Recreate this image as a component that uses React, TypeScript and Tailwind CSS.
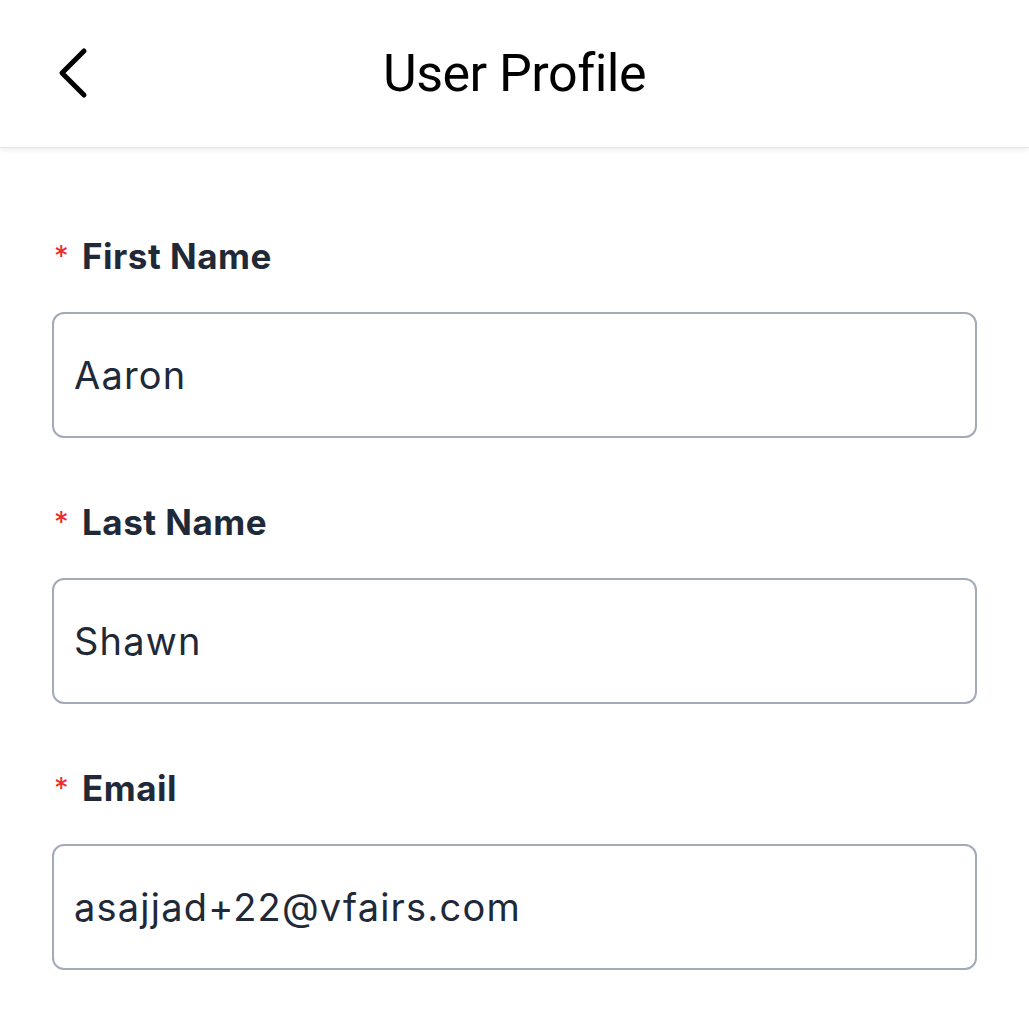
const fields = [
  { label: "First Name", value: "Aaron" },
  { label: "Last Name", value: "Shawn" },
  { label: "Email", value: "asajjad+22@vfairs.com" },
];

export default function App() {
  return (
    <div className="min-h-screen bg-white font-['Inter',sans-serif]">
      <header className="relative flex h-[148px] items-center justify-center border-b border-[#e5e5e5] shadow-[0_2px_5px_rgba(0,0,0,0.07)]">
        <button className="absolute left-[52px] top-[44px] text-black">
          <svg width="40" height="60" viewBox="0 0 40 60" fill="none">
            <path
              d="M32 7 L10 29 L32 51"
              stroke="currentColor"
              strokeWidth="5"
              strokeLinecap="round"
              strokeLinejoin="round"
            />
          </svg>
        </button>
        <h1 className="font-['Roboto',sans-serif] text-[52px] leading-none font-normal tracking-[-0.5px] text-black">
          User Profile
        </h1>
      </header>

      <main className="px-[52px] pt-[88px]">
        {fields.map((field) => (
          <div key={field.label} className="mb-[64px]">
            <label className="flex items-center text-[35px] leading-[40px] font-bold tracking-[0.5px] text-[#1f2937]">
              <span className="mr-[13px] ml-[2px] text-[29px] font-normal text-[#ef2b2b]">*</span>
              {field.label}
            </label>
            <div className="mt-[36px] flex h-[126px] items-center rounded-[12px] border-2 border-[#a3abb8] px-[20px]">
              <span className="text-[38px] tracking-[1.2px] text-[#1f2937]">{field.value}</span>
            </div>
          </div>
        ))}
      </main>
    </div>
  );
}
